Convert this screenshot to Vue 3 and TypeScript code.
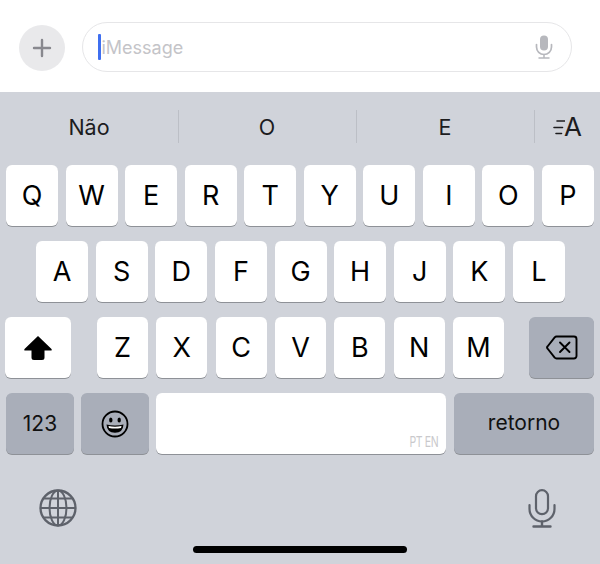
<template>
  <div class="screen">
    <div class="composer">
      <button class="plus">
        <svg width="20" height="20" viewBox="0 0 20 20">
          <path d="M10 2v16M2 10h16" stroke="#88888e" stroke-width="2.4" stroke-linecap="round" fill="none" />
        </svg>
      </button>
      <div class="field">
        <span class="caret"></span>
        <span class="placeholder">iMessage</span>
        <svg class="field-mic" width="18" height="24" viewBox="0 0 18 24">
          <rect x="5" y="0.5" width="8" height="15" rx="4" fill="#b7b8bd" />
          <path d="M1.5 9.5v2.5a7.5 7.5 0 0 0 15 0V9.5" stroke="#b7b8bd" stroke-width="1.7" stroke-linecap="round" fill="none" />
          <path d="M9 19.5v3M4 23h10" stroke="#b7b8bd" stroke-width="1.5" stroke-linecap="round" fill="none" />
        </svg>
      </div>
    </div>

    <div class="keyboard">
      <div class="suggestions">
        <div v-for="word in suggestions" :key="word" class="suggestion">{{ word }}</div>
        <div class="suggestion last">
          <svg class="dashes" width="12" height="18" viewBox="0 0 12 18">
            <path d="M4 3h7.500M1 9.500h8.500M3 15.500h5.500" stroke="#1c1c1e" stroke-width="1.600" stroke-linecap="round" fill="none" />
          </svg>
          <span>A</span>
        </div>
      </div>

      <div class="rows">
        <div class="row row-top">
          <div v-for="k in topRow" :key="k" class="key letter">{{ k }}</div>
        </div>
        <div class="row row-middle">
          <div v-for="k in middleRow" :key="k" class="key letter">{{ k }}</div>
        </div>
        <div class="row row-third">
          <div class="key shift">
            <svg width="30" height="26" viewBox="0 0 30 26">
              <path d="M15 1 L28.500 14 Q29.500 15.500 28 15.500 H21.500 V22.500 Q21.500 25 19 25 H11 Q8.500 25 8.500 22.500 V15.500 H2 Q0.500 15.500 1.500 14 Z" fill="#000" />
            </svg>
          </div>
          <div class="letters">
            <div v-for="k in bottomRow" :key="k" class="key letter">{{ k }}</div>
          </div>
          <div class="key dark del">
            <svg width="32" height="25" viewBox="0 0 32 25">
              <path d="M10.500 1.500H28a2.500 2.500 0 0 1 2.500 2.500v17a2.500 2.500 0 0 1-2.500 2.500H10.500a2.500 2.500 0 0 1-1.800-.8L1.500 13.500a1.500 1.500 0 0 1 0-2l7.200-9.200a2.500 2.500 0 0 1 1.800-.8z" stroke="#000" stroke-width="1.900" fill="none" stroke-linejoin="round" />
              <path d="M14 7.500l9.500 9.500M23.500 7.500L14 17" stroke="#000" stroke-width="1.900" stroke-linecap="round" fill="none" />
            </svg>
          </div>
        </div>
        <div class="row row-bottom">
          <div class="key dark mode">123</div>
          <div class="key dark mode">
            <svg width="28" height="28" viewBox="0 0 28 28">
              <circle cx="14" cy="14" r="12.500" stroke="#000" stroke-width="1.800" fill="none" />
              <ellipse cx="9.800" cy="10" rx="1.700" ry="2.500" fill="#000" />
              <ellipse cx="18.200" cy="10" rx="1.700" ry="2.500" fill="#000" />
              <path d="M5.500 14.500 Q14 16.500 22.500 14.500 Q22 22.800 14 22.800 Q6 22.800 5.500 14.500 Z" fill="#000" />
              <path d="M7.500 16 Q14 17.500 20.500 16 L20 18 Q14 19.200 8 18 Z" fill="#fff" />
            </svg>
          </div>
          <div class="key space"><span class="langs">PT EN</span></div>
          <div class="key dark enter">retorno</div>
        </div>
      </div>

      <div class="tools">
        <svg width="38" height="38" viewBox="0 0 38 38" fill="none" stroke="#5e626b" stroke-width="2">
          <circle cx="19" cy="19" r="17.500" stroke-width="2.300" />
          <ellipse cx="19" cy="19" rx="8.500" ry="17.500" />
          <path d="M19 1.500v35M1.500 19h35M4.500 9.500h29M4.500 28.500h29" />
        </svg>
        <svg width="28" height="39" viewBox="0 0 28 39" fill="none" stroke="#5e626b" stroke-width="2.200" stroke-linecap="round">
          <rect x="8" y="1.200" width="12" height="24" rx="6" />
          <path d="M1.500 16v4a12.500 12.500 0 0 0 25 0v-4" />
          <path d="M14 32.500v5M5.500 37.500h17" stroke-width="2.400" />
        </svg>
      </div>

      <div class="home-bar"></div>
    </div>
  </div>
</template>

<script setup lang="ts">
const suggestions: string[] = ["Não", "O", "E"];
const topRow: string[] = ["Q", "W", "E", "R", "T", "Y", "U", "I", "O", "P"];
const middleRow: string[] = ["A", "S", "D", "F", "G", "H", "J", "K", "L"];
const bottomRow: string[] = ["Z", "X", "C", "V", "B", "N", "M"];
</script>

<style>
html,
body {
  margin: 0;
  background: #fff;
}
</style>

<style scoped>
.screen {
  width: 600px;
  height: 564px;
  display: flex;
  flex-direction: column;
  overflow: hidden;
  font-family: Inter, "Liberation Sans", sans-serif;
  color: #111;
}
.composer {
  height: 92px;
  box-sizing: border-box;
  background: #fff;
  display: flex;
  align-items: center;
  padding: 0 28px 0 19px;
  gap: 17px;
}
.plus {
  width: 46px;
  height: 46px;
  padding: 0;
  border: none;
  border-radius: 50%;
  background: #e9e9eb;
  display: flex;
  align-items: center;
  justify-content: center;
  flex: none;
  margin-top: 4px;
}
.field {
  flex: 1;
  height: 50px;
  box-sizing: border-box;
  margin-top: 2px;
  border: 1.5px solid #e6e6e8;
  border-radius: 25px;
  display: flex;
  align-items: center;
  padding: 0 18px 0 14.5px;
}
.caret {
  width: 3px;
  height: 26px;
  border-radius: 1px;
  background: #3f6ff0;
  flex: none;
}
.placeholder {
  margin-left: 1px;
  flex: 1;
  font-size: 18px;
  color: #c4c4c8;
}
.keyboard {
  flex: 1;
  background: #d0d3da;
  display: flex;
  flex-direction: column;
}
.suggestions {
  height: 69px;
  margin-bottom: 4px;
  display: flex;
  align-items: center;
  font-size: 21.5px;
  color: #1c1c1e;
}
.suggestion {
  width: 178px;
  height: 33px;
  line-height: 35px;
  text-align: center;
  border-right: 1px solid #bcbfc6;
  margin-right: -1px;
}
.suggestion.last {
  flex: 1;
  border: none;
  margin: 0;
  display: flex;
  align-items: center;
  padding-left: 19px;
  font-size: 26px;
}
.dashes {
  margin-right: -1px;
}
.rows {
  display: flex;
  flex-direction: column;
  gap: 15px;
}
.row {
  height: 61px;
  display: flex;
}
.row-top {
  padding: 0 6px;
  justify-content: space-between;
}
.row-middle {
  padding: 0 35px 0 36px;
  justify-content: space-between;
}
.row-third {
  padding: 0 6px 0 5px;
  justify-content: space-between;
}
.row-bottom {
  padding: 0 6px;
  gap: 7px;
}
.letters {
  width: 407px;
  margin-left: 1px;
  display: flex;
  justify-content: space-between;
}
.key {
  box-sizing: border-box;
  border-radius: 6px;
  background: #fff;
  box-shadow: 0 1px 0 #8e9197;
  display: flex;
  align-items: center;
  justify-content: center;
}
.letter {
  width: 52px;
  font-size: 27px;
  font-weight: 380;
  color: #000;
}
.letters .letter {
  width: 51px;
}
.shift {
  width: 66px;
}
.del {
  width: 65px;
}
.dark {
  background: #a9aeb9;
}
.mode {
  width: 68px;
  font-size: 21px;
}
.space {
  flex: 1;
  align-items: flex-end;
  justify-content: flex-end;
  padding: 0 8px 5px 0;
}
.langs {
  font-size: 15px;
  line-height: 14px;
  color: #c9c9cc;
  letter-spacing: -0.5px;
  transform: scaleX(0.7);
  transform-origin: right center;
  white-space: nowrap;
}
.enter {
  width: 140px;
  margin-left: 1px;
  padding-bottom: 2px;
  font-size: 21px;
}
.tools {
  height: 76px;
  margin-top: 16px;
  display: flex;
  align-items: center;
  justify-content: space-between;
  padding: 0 44px 0 39px;
}
.home-bar {
  width: 214px;
  height: 7px;
  border-radius: 4px;
  background: #000;
  align-self: center;
}
</style>
